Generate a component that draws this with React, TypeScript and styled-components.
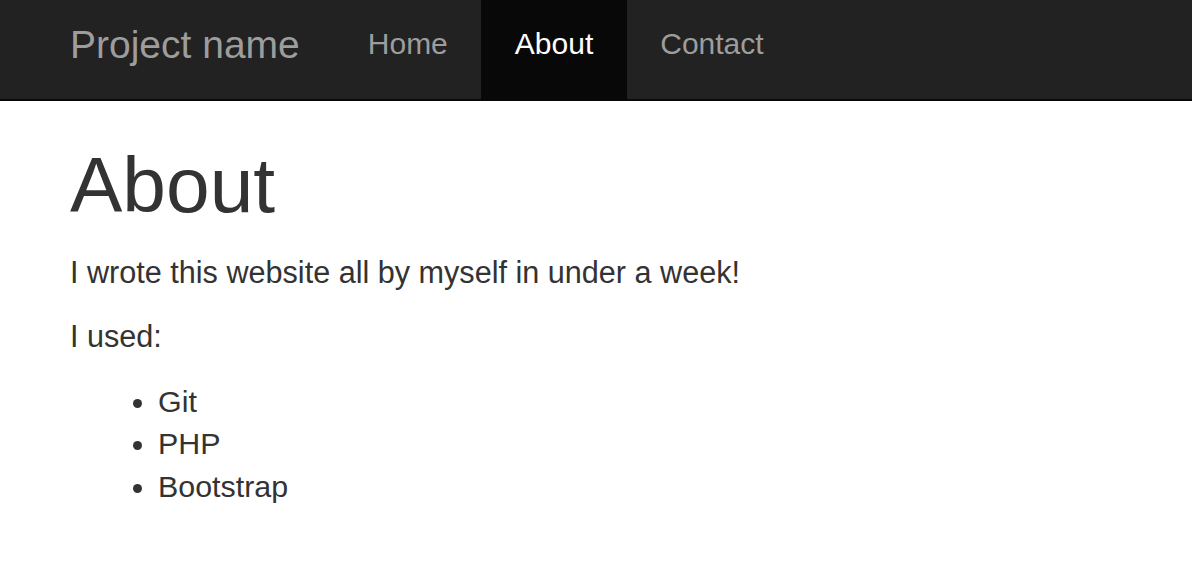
import React from "react";
import styled, { createGlobalStyle } from "styled-components";

const GlobalStyle = createGlobalStyle`
  html, body {
    margin: 0;
    padding: 0;
    background: #fff;
  }
  body {
    font-family: "Liberation Sans", Arial, Helvetica, sans-serif;
    color: #333;
  }
  * { box-sizing: border-box; }
`;

const Navbar = styled.nav`
  background: #222;
  border-bottom: 2px solid #080808;
  height: 101px;
  margin-bottom: 42px;
`;

const NavContainer = styled.div`
  display: flex;
  align-items: stretch;
  height: 99px;
  padding: 0 38px;
`;

const Brand = styled.a`
  display: block;
  padding: 23px 34.5px 0 32px;
  font-size: 39px;
  line-height: 43px;
  color: #9d9d9d;
  text-decoration: none;
`;

const NavList = styled.ul`
  display: flex;
  list-style: none;
  margin: 0;
  padding: 0;
`;

const NavLink = styled.a<{ $active?: boolean }>`
  display: block;
  height: 99px;
  padding: 22px 33.5px 0;
  font-size: 30px;
  line-height: 43px;
  color: ${(p) => (p.$active ? "#fff" : "#9d9d9d")};
  background: ${(p) => (p.$active ? "#080808" : "transparent")};
  text-decoration: none;
`;

const Main = styled.main`
  padding: 0 70px;
`;

const Title = styled.h1`
  margin: 0 0 22px;
  font-size: 78.5px;
  font-weight: 500;
  line-height: 85.8px;
  color: #333;
`;

const Para = styled.p`
  margin: 0 0 21.4px;
  font-size: 30.6px;
  line-height: 43px;
`;

const ToolList = styled.ul`
  margin: 3px 0 0;
  padding-left: 88px;
  font-size: 30.4px;
  line-height: 42.6px;
`;

const tools = ["Git", "PHP", "Bootstrap"];

export default function App() {
  return (
    <>
      <GlobalStyle />
      <Navbar>
        <NavContainer>
          <Brand href="#">Project name</Brand>
          <NavList>
            <li><NavLink href="#">Home</NavLink></li>
            <li><NavLink href="#" $active>About</NavLink></li>
            <li><NavLink href="#">Contact</NavLink></li>
          </NavList>
        </NavContainer>
      </Navbar>
      <Main>
        <Title>About</Title>
        <Para>I wrote this website all by myself in under a week!</Para>
        <Para>I used:</Para>
        <ToolList>
          {tools.map((t) => (
            <li key={t}>{t}</li>
          ))}
        </ToolList>
      </Main>
    </>
  );
}
